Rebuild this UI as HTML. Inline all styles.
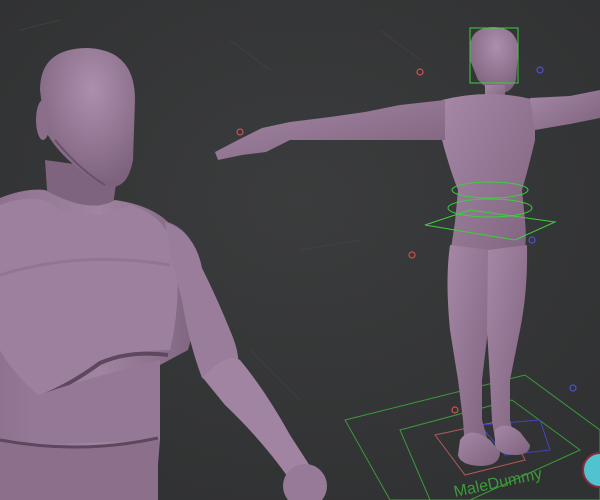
<!DOCTYPE html>
<html><head><meta charset="utf-8"><style>
html,body{margin:0;padding:0;background:#363738;}
svg{display:block}
</style></head><body>
<svg width="600" height="500" viewBox="0 0 600 500" xmlns="http://www.w3.org/2000/svg">
<defs>
<radialGradient id="bg" cx="50%" cy="40%" r="70%"><stop offset="0" stop-color="#3b3c3d"/><stop offset="1" stop-color="#303132"/></radialGradient>
<linearGradient id="p" x1="0" y1="0" x2="1" y2="1"><stop offset="0" stop-color="#a688a6"/><stop offset="1" stop-color="#7d627d"/></linearGradient>
<linearGradient id="p2" x1="0" y1="0" x2="1" y2="0"><stop offset="0" stop-color="#8f728f"/><stop offset="0.5" stop-color="#a084a0"/><stop offset="1" stop-color="#7f647f"/></linearGradient>
<radialGradient id="hd" cx="55%" cy="30%" r="70%"><stop offset="0" stop-color="#ad8fad"/><stop offset="1" stop-color="#7d627d"/></radialGradient>
</defs>
<rect width="600" height="500" fill="url(#bg)"/>
<g stroke="#4a4b4c" stroke-width="1" opacity="0.5">
<line x1="20" y1="30" x2="60" y2="20"/><line x1="230" y1="40" x2="270" y2="70"/><line x1="300" y1="250" x2="360" y2="240"/><line x1="380" y1="30" x2="420" y2="60"/><line x1="250" y1="350" x2="300" y2="400"/>
</g>
<g fill="none" stroke="#3c9a3c" stroke-width="1">
<polygon points="345,420 525,375 600,430 600,500 390,500"/>
<polygon points="400,430 512,400 580,450 470,500 430,500"/>
<polygon points="435,435 505,420 525,460 465,475" stroke="#b05a5a"/>
<polygon points="480,425 540,420 550,450 505,455" stroke="#4444c0"/>
</g>
<text x="455" y="497" font-family="Liberation Sans,sans-serif" font-size="16" fill="#3c9a3c" transform="rotate(-12 455 497)">MaleDummy</text>
<circle cx="600" cy="470" r="17" fill="#4fc4d0" stroke="#8a2a3a" stroke-width="2"/>
<!-- right figure -->
<g fill="url(#p)">
<path d="M470,45 Q472,27 494,27 Q518,28 518,50 L516,80 Q512,93 500,93 Q490,92 478,80 L470,60 Z" fill="url(#hd)"/>
<rect x="485" y="85" width="20" height="15"/>
<path d="M442,100 Q490,88 535,100 L535,140 Q528,170 522,190 L525,220 Q528,250 520,262 Q500,270 485,268 Q460,265 450,255 L455,222 L458,190 Q450,170 442,140 Z"/>
<path d="M445,100 L400,105 L365,112 L330,117 L290,122 L262,128 L238,140 L215,152 L218,160 L242,155 L266,152 L290,140 L330,140 L365,140 L400,140 L445,140 Z"/>
<path d="M530,98 L570,96 L600,90 L600,118 L570,124 L535,130 Z"/>
<path d="M450,245 L490,250 L488,330 L482,380 L482,420 L490,448 L465,450 L463,420 L458,380 L450,330 Q445,280 450,245 Z"/>
<path d="M488,250 L527,245 Q528,290 520,330 L510,380 L510,420 L515,440 L495,440 L492,420 L490,380 L487,330 Z"/>
<path d="M460,440 Q470,425 490,440 L500,452 Q500,466 480,466 Q460,465 458,455 Z"/>
<path d="M495,430 Q505,420 520,432 L530,445 Q530,455 515,455 Q498,455 495,445 Z"/>
</g>
<g fill="none" stroke="#3cd03c" stroke-width="1">
<rect x="470" y="28" width="48" height="55"/>
<ellipse cx="490" cy="190" rx="38" ry="8"/>
<ellipse cx="490" cy="208" rx="42" ry="9"/>
<polygon points="425,225 470,210 555,222 515,240"/>
</g>
<g fill="none" stroke="#d05050" stroke-width="1.2">
<circle cx="420" cy="72" r="3"/><circle cx="240" cy="132" r="3"/><circle cx="412" cy="255" r="3"/><circle cx="455" cy="410" r="3"/>
</g>
<g fill="none" stroke="#5050d0" stroke-width="1.2">
<circle cx="573" cy="388" r="3"/><circle cx="540" cy="70" r="3"/><circle cx="532" cy="240" r="3"/>
</g>
<!-- left big figure -->
<g>
<path d="M45,160 L48,205 Q80,222 112,212 L118,170 Z" fill="#7f647f"/>
<path d="M0,198 Q25,188 45,190 Q90,215 115,200 Q150,205 168,222 Q195,232 198,265 Q200,310 188,350 L160,365 L160,440 L155,500 L0,500 Z" fill="url(#p2)"/>
<path d="M0,205 Q40,190 60,210 Q95,222 130,205 Q165,215 175,250 Q182,300 170,350 Q130,350 100,362 Q70,385 40,397 Q10,370 0,350 Z" fill="#9d809d"/>
<path d="M40,397 Q70,385 100,363 Q130,350 168,355" fill="none" stroke="#5f475f" stroke-width="4"/>
<path d="M0,275 Q80,250 170,265" fill="none" stroke="#8a6e8a" stroke-width="3" opacity="0.6"/>
<path d="M30,398 Q80,380 160,360 L160,440 L30,445 Z" fill="#957895"/>
<path d="M0,440 Q80,455 158,438 L158,500 L0,500 Z" fill="#8b6f8b"/>
<path d="M0,440 Q80,455 158,438" fill="none" stroke="#5e465e" stroke-width="3"/>
<!-- upper arm -->
<path d="M165,222 Q195,232 202,268 Q218,300 232,335 Q242,360 236,372 Q220,388 202,378 Q188,340 182,300 Q172,265 165,222 Z" fill="#9a7d9a"/>
<!-- forearm -->
<path d="M203,378 Q225,352 240,360 Q265,390 290,435 L310,466 L290,480 Q262,440 225,405 Z" fill="#a184a1"/>
<ellipse cx="305" cy="486" rx="22" ry="22" fill="#977a97"/>
<!-- head -->
<path d="M40,90 Q40,48 88,48 Q135,50 135,100 L133,160 Q128,188 110,187 Q95,185 80,170 Q55,150 45,130 Z" fill="url(#hd)"/>
<path d="M55,140 Q80,170 105,185" fill="none" stroke="#6a506a" stroke-width="2"/>
<ellipse cx="43" cy="120" rx="7" ry="20" fill="#8a6e8a"/>
</g>
</svg>
</body></html>
